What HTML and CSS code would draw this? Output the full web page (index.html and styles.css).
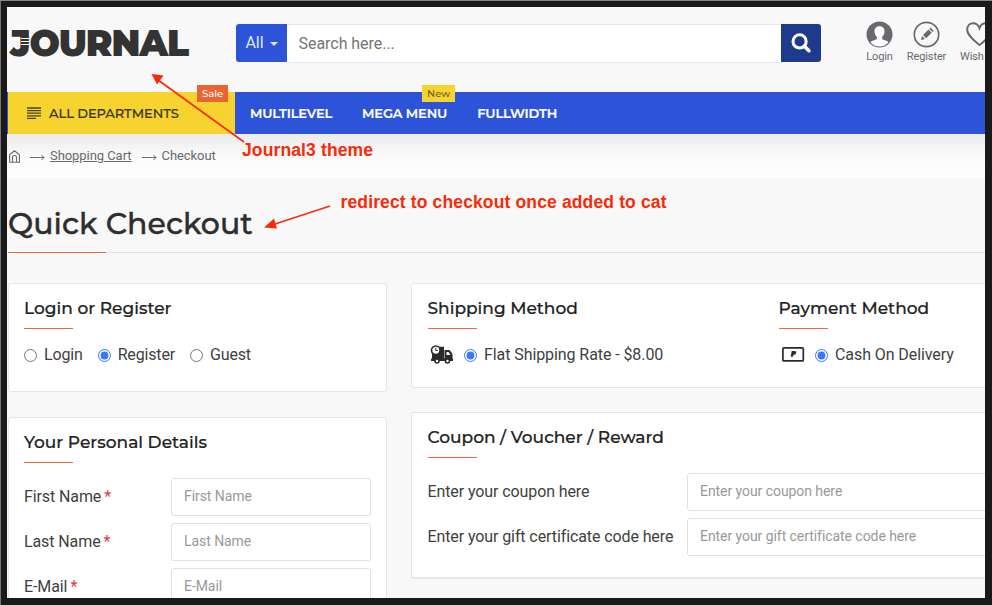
FILE: index.html
```
<!DOCTYPE html>
<html lang="en">
<head>
  <meta charset="UTF-8">
  <meta name="viewport" content="width=device-width, initial-scale=1.0">
  <title>Quick Checkout</title>
  <link rel="stylesheet" href="styles.css">
</head>
<body>
  <div class="window">
    <header class="header">
      <a class="logo">
        <svg width="200" height="70" viewBox="0 0 200 70">
          <text class="logo-text" x="2" y="42" textLength="178" lengthAdjust="spacingAndGlyphs">JOURNAL</text>
          <path class="logo-cut" d="M13 24.500h8M13 27.500h8M13 30.500h8"/>
        </svg>
      </a>
      <div class="search">
        <button class="search-all">All <span class="caret"></span></button>
        <input class="search-input" type="text" placeholder="Search here...">
        <button class="search-btn">
          <svg width="20" height="20" viewBox="0 0 20 20" fill="none" stroke="#fff">
            <circle cx="8.6" cy="8.4" r="6.6" stroke-width="3"/>
            <path d="M13.4 13.2l4.500 4.500" stroke-width="3.600" stroke-linecap="round"/>
          </svg>
        </button>
      </div>
      <nav class="links">
        <a class="link">
          <svg width="27" height="27" viewBox="0 0 27 27">
            <circle cx="13.5" cy="13.5" r="13" fill="#69696f"/>
            <path fill="#fff" d="M13.5 5.2c-3 0-5 2-5 5 0 2.400.9 4.300 2.300 5.500v2.300c0 .8-4.700 1.200-6.300 3.200 2.200 2.800 5.400 4.300 9 4.300s6.800-1.500 9-4.300c-1.600-2-6.300-2.400-6.300-3.200v-2.300c1.400-1.200 2.300-3.100 2.300-5.500 0-3-2-5-5-5z"/>
          </svg>
          <span>Login</span>
        </a>
        <a class="link">
          <svg width="27" height="27" viewBox="0 0 27 27">
            <circle cx="13.500" cy="13.500" r="12.200" fill="none" stroke="#69696f" stroke-width="1.700"/>
            <path fill="#69696f" d="M8 19l1-4 3 3zM10 14l5.500-5.500 3.200 3.200-5.500 5.500zM16.300 7.700l1.200-1.100 3.100 3.100-1.100 1.200z"/>
          </svg>
          <span>Register</span>
        </a>
        <a class="link wish">
          <svg width="27" height="27" viewBox="0 0 27 27">
            <path fill="none" stroke="#69696f" stroke-width="1.900" d="M13.500 24C8 19.500 1.200 14.500 1.200 8.500c0-3.800 2.600-6.300 6-6.300 3 0 5.200 2 6.300 5 1.100-3 3.300-5 6.300-5 3.400 0 6 2.500 6 6.300 0 6-6.800 11-12.300 15.500z"/>
          </svg>
          <span>Wish</span>
        </a>
      </nav>
    </header>

    <nav class="menu">
      <a class="departments">
        <svg width="14" height="12" viewBox="0 0 14 12" stroke="#4a431f" stroke-width="1.300">
          <path d="M0 1h14M0 3.600h14M0 6.200h14M0 8.800h14M0 11.300h9"/>
        </svg>
        <span class="dep-text">ALL DEPARTMENTS</span>
        <span class="badge sale">Sale</span>
      </a>
      <a class="item">MULTILEVEL</a>
      <a class="item">MEGA MENU<span class="badge new">New</span></a>
      <a class="item">FULLWIDTH</a>
    </nav>

    <div class="breadcrumb">
      <svg class="home" width="11" height="13" viewBox="0 0 11 13" fill="none" stroke="#69696f" stroke-width="1.100">
        <path d="M.6 4.800L5.500.8l4.900 4v7.500H.6zM3.500 12V7.500a2 2 0 0 1 4 0V12"/>
      </svg>
      <svg class="arrow" width="15" height="7" viewBox="0 0 15 7" fill="none" stroke="#69696f"><path d="M0 3.500h14M11.500 1l2.500 2.500L11.500 6"/></svg>
      <a class="crumb-link">Shopping Cart</a>
      <svg class="arrow" width="15" height="7" viewBox="0 0 15 7" fill="none" stroke="#69696f"><path d="M0 3.500h14M11.500 1l2.500 2.500L11.500 6"/></svg>
      <span>Checkout</span>
    </div>

    <h1 class="page-title">Quick Checkout</h1>

    <div class="columns">
      <div class="left">
        <section class="card login-card">
          <h3 class="title">Login or Register</h3>
          <div class="radios account">
            <label><input type="radio" name="account"><span>Login</span></label>
            <label><input type="radio" name="account" checked><span>Register</span></label>
            <label><input type="radio" name="account"><span>Guest</span></label>
          </div>
        </section>
        <section class="card">
          <h3 class="title">Your Personal Details</h3>
          <div class="field"><label>First Name<i>*</i></label><input type="text" placeholder="First Name"></div>
          <div class="field"><label>Last Name<i>*</i></label><input type="text" placeholder="Last Name"></div>
          <div class="field"><label>E-Mail<i>*</i></label><input type="text" placeholder="E-Mail"></div>
        </section>
      </div>
      <div class="right">
        <section class="card methods">
          <div class="method">
            <h3 class="title">Shipping Method</h3>
            <div class="radios">
              <svg class="icon" width="24" height="19" viewBox="0 0 24 19">
                <path fill="#2b2b2b" d="M2 7h12v8H2zM14.500 5h4.500c1 0 3.500 3.500 3.500 4.500V15h-8z"/>
                <path fill="#fff" d="M16.500 7h2l2 3h-4z"/>
                <path fill="#2b2b2b" d="M8 1.800h6V8H8zM1 13.500h22V16H1z"/>
                <circle cx="5.800" cy="5.300" r="4.300" fill="#fff" stroke="#2b2b2b" stroke-width="1.700"/>
                <path d="M5.800 2.800v2.700h2" fill="none" stroke="#2b2b2b"/>
                <circle cx="7" cy="16" r="2" fill="#fff" stroke="#2b2b2b" stroke-width="1.600"/>
                <circle cx="17.500" cy="16" r="2" fill="#fff" stroke="#2b2b2b" stroke-width="1.600"/>
              </svg>
              <label><input type="radio" name="shipping" checked><span>Flat Shipping Rate - $8.00</span></label>
            </div>
          </div>
          <div class="method">
            <h3 class="title">Payment Method</h3>
            <div class="radios">
              <svg class="icon" width="24" height="19" viewBox="0 0 24 19">
                <rect x="1.900" y="2.900" width="20.400" height="13" rx="1" fill="none" stroke="#2b2b2b" stroke-width="1.700"/>
                <path fill="#2b2b2b" d="M10.700 6h2.800c1.400 0 2 .9 1.700 2-.4 1.300-1.400 1.800-2.800 1.800l-.4 2H9.700z"/>
              </svg>
              <label><input type="radio" name="payment" checked><span>Cash On Delivery</span></label>
            </div>
          </div>
        </section>
        <section class="card coupon-card">
          <h3 class="title">Coupon / Voucher / Reward</h3>
          <div class="field wide"><label>Enter your coupon here</label><input type="text" placeholder="Enter your coupon here"></div>
          <div class="field wide"><label>Enter your gift certificate code here</label><input type="text" placeholder="Enter your gift certificate code here"></div>
        </section>
      </div>
    </div>
  </div>

  <!-- notes drawn over the page -->
  <svg class="notes" width="992" height="605" viewBox="0 0 992 605">
    <path class="note-line" d="M244 142L158 80M330 206L272 225"/>
    <path class="note-head" d="M151.500 74l12 1.500-6.500 9zM264 227.500l10-9 3 10z"/>
    <text x="242" y="155.500" textLength="131">Journal3 theme</text>
    <text x="340.500" y="207.500" textLength="326">redirect to checkout once added to cat</text>
  </svg>
</body>
</html>
```
FILE: styles.css
```
* {
  box-sizing: border-box;
}

body {
  margin: 0;
  width: 992px;
  height: 605px;
  overflow: hidden;
  position: relative;
  font-family: Roboto, sans-serif;
  color: #3f3f3f;
}

.window {
  height: 605px;
  border: 7px solid #1a1a1a;
  background: #f8f8f8;
  overflow: hidden;
}

/* thin grey edge of the frame */
body::before {
  content: "";
  position: absolute;
  inset: 0;
  border-top: 1px solid #858885;
  border-left: 1px solid #777;
}

button, input {
  font-family: inherit;
  margin: 0;
}

.header {
  display: flex;
  height: 85px;
  width: 1100px;
}

.logo {
  width: 229px;
  padding: 7px 0 0 1px;
}

.logo svg {
  overflow: visible;
}

.logo-text {
  font: 900 38px Montserrat, Inter, sans-serif;
  letter-spacing: -1.2px;
  fill: #333;
}

.logo-cut {
  stroke: #f8f8f8;
  stroke-width: 1;
}

.search {
  display: flex;
  width: 585px;
  height: 39px;
  margin-top: 17px;
}

.search-all {
  width: 51px;
  height: 38px;
  border: 0;
  padding: 0 0 1px;
  border-radius: 3px 0 0 3px;
  background: #2d53d8;
  color: #dfe6fb;
  font-size: 16px;
}

.caret {
  display: inline-block;
  margin-left: 2px;
  border: 4px solid transparent;
  border-top-color: #dfe6fb;
  border-bottom: 0;
  vertical-align: 2px;
}

.search-input {
  flex: 1;
  min-width: 0;
  border: 1px solid #dfe7f8;
  border-width: 1px 0;
  padding: 0 11.5px;
  font-size: 16px;
  letter-spacing: -0.04px;
}

.search-input::placeholder {
  color: #757575;
}

.search-btn {
  display: flex;
  align-items: center;
  justify-content: center;
  width: 40px;
  height: 38px;
  padding: 0 1px 1px 0;
  border: 0;
  border-radius: 0 3px 3px 0;
  background: #1d3a8d;
}

.links {
  display: flex;
  padding: 14px 0 0 44px;
}

.link {
  display: flex;
  flex-direction: column;
  align-items: center;
  gap: 2px;
  width: 29px;
  margin-right: 18px;
  font-size: 11px;
  line-height: 13px;
  letter-spacing: -0.1px;
  color: #69696f;
}

.wish {
  margin-left: 1px;
  align-items: flex-start;
  width: 40px;
}

.wish svg {
  margin-left: 6px;
}

.menu {
  display: flex;
  height: 42px;
  padding-left: 1px;
  background: #2d53d8;
  font-family: Montserrat, Inter, sans-serif;
  font-size: 13px;
  font-weight: 600;
  line-height: 42px;
}

.departments {
  position: relative;
  display: flex;
  align-items: center;
  gap: 8px;
  width: 227px;
  padding-left: 19px;
  background: #f7d330;
  color: #3c3721;
  font-weight: 500;
}

.dep-text {
  letter-spacing: -0.05px;
  -webkit-text-stroke: 0.2px #3c3721;
}

.item {
  position: relative;
  margin-left: 15px;
  padding-right: 15px;
  color: #fff;
  letter-spacing: -0.15px;
  -webkit-text-stroke: 0.2px #fff;
}

.badge {
  position: absolute;
  top: -7px;
  height: 17px;
  font-size: 10px;
  font-weight: 500;
  line-height: 17px;
  text-align: center;
  letter-spacing: 0;
  -webkit-text-stroke: 0;
}

.sale {
  right: 7px;
  width: 31px;
  background: #e96431;
  color: #fff;
}

.new {
  right: 7px;
  width: 33px;
  background: #f7d330;
  color: #6c6331;
}

.breadcrumb {
  display: flex;
  align-items: center;
  height: 44px;
  padding: 0 0 2px 2px;
  background: linear-gradient(#ebebeb, #fafafa 50%, #fff);
  font-size: 13px;
  letter-spacing: -0.06px;
  color: #69696f;
}

.home {
  margin-top: 2px;
}

.arrow {
  margin: 4px 5px 0 10px;
}

.crumb-link {
  text-decoration: underline;
}

.page-title {
  position: relative;
  height: 75px;
  margin: 0 0 30px 1px;
  padding-top: 26px;
  border-bottom: 1px solid #e2e2e2;
  font: 500 30px/40px Montserrat, Inter, sans-serif;
  letter-spacing: 0.05px;
  color: #2e2e2e;
  -webkit-text-stroke: 0.4px #2e2e2e;
}

.page-title::after {
  content: "";
  position: absolute;
  left: 0;
  bottom: -1px;
  width: 98px;
  height: 1px;
  background: #ee6a3a;
}

.columns {
  display: flex;
  gap: 24px;
  width: 1120px;
  padding-left: 1px;
}

.left {
  width: 379px;
}

.right {
  flex: 1;
}

.card {
  margin-bottom: 25px;
  padding: 14px 15px 20px;
  border: 1px solid #e6e6e6;
  border-radius: 3px;
  background: #fff;
}

.right .card {
  padding-left: 15.5px;
}

.login-card {
  height: 109px;
}

.methods {
  display: flex;
  height: 105px;
  margin-bottom: 24px;
}

.method {
  width: 351px;
  flex: none;
}

.coupon-card {
  height: 167px;
  border-bottom-width: 2px;
}

.title {
  position: relative;
  margin: 0 0 15px;
  height: 31px;
  font: 500 17px/20px Montserrat, Inter, sans-serif;
  color: #222;
  -webkit-text-stroke: 0.2px #222;
}

.title::after {
  content: "";
  display: block;
  width: 49px;
  height: 1px;
  margin-top: 10px;
  background: #ee6a3a;
}

.radios {
  display: flex;
  align-items: center;
  height: 20px;
  font-size: 16px;
  letter-spacing: -0.08px;
}

.radios label {
  display: flex;
  align-items: center;
  margin-right: 15px;
}

.account {
  letter-spacing: -0.16px;
}

.radios input {
  width: 13px;
  height: 13px;
  margin: 2px 7px 0 0;
  accent-color: #3b78ff;
}

.icon {
  margin: 0 10.5px 0 2px;
}

.field {
  display: flex;
  align-items: center;
  height: 38px;
  margin-bottom: 7px;
  font-size: 16px;
  letter-spacing: -0.1px;
}

.field label {
  width: 148px;
  padding-bottom: 1px;
}

.field i {
  margin-left: 3px;
  font-style: normal;
  color: #e3344a;
}

.field input {
  width: 200px;
  height: 38px;
  padding: 0 12px 2px;
  border: 1px solid #e1e1e1;
  border-radius: 3px;
  font-size: 14px;
  letter-spacing: -0.06px;
}

.field input::placeholder {
  color: #999;
}

.wide label {
  width: 259.5px;
}

.wide input {
  width: 400px;
}

.notes {
  position: absolute;
  left: 0;
  top: 0;
  font: bold 17.5px "Liberation Sans", Arial, sans-serif;
  fill: #f92a08;
}

.note-line {
  stroke: #f92a08;
  stroke-width: 1.6;
}
```
